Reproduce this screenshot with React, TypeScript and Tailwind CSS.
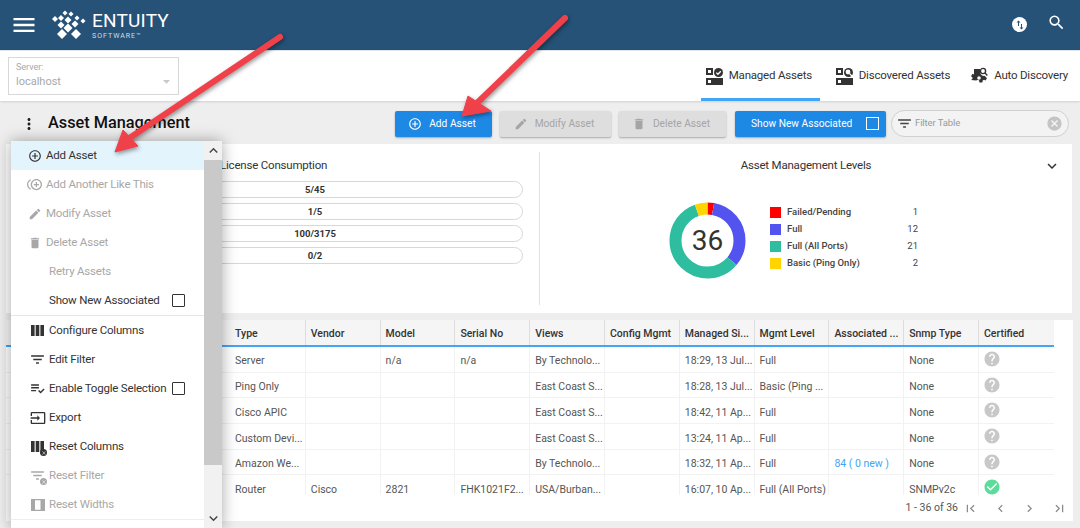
import { ReactNode } from "react";
import {
  MdAddCircleOutline,
  MdArrowDropDown,
  MdCancel,
  MdCheckCircle,
  MdClose,
  MdControlPointDuplicate,
  MdDelete,
  MdEdit,
  MdExpandLess,
  MdExpandMore,
  MdFilterList,
  MdFirstPage,
  MdHelp,
  MdInput,
  MdLastPage,
  MdMenu,
  MdMoreVert,
  MdNavigateBefore,
  MdNavigateNext,
  MdPlaylistAddCheck,
  MdSearch,
  MdSwapVert,
} from "react-icons/md";

const columns = ["Type", "Vendor", "Model", "Serial No", "Views", "Config Mgmt", "Managed Si...", "Mgmt Level", "Associated ...", "Snmp Type", "Certified"];

const rows = [
  ["Server", "", "n/a", "n/a", "By Technolo...", "", "18:29, 13 Jul...", "Full", "", "None", "unknown"],
  ["Ping Only", "", "", "", "East Coast S...", "", "18:28, 13 Jul...", "Basic (Ping ...", "", "None", "unknown"],
  ["Cisco APIC", "", "", "", "East Coast S...", "", "18:42, 11 Ap...", "Full", "", "None", "unknown"],
  ["Custom Devi...", "", "", "", "East Coast S...", "", "13:24, 11 Ap...", "Full", "", "None", "unknown"],
  ["Amazon We...", "", "", "", "By Technolo...", "", "18:32, 11 Ap...", "Full", "84 ( 0 new )", "None", "unknown"],
  ["Router", "Cisco", "2821", "FHK1021F2...", "USA/Burban...", "", "16:07, 10 Ap...", "Full (All Ports)", "", "SNMPv2c", "ok"],
];

const legend = [
  { name: "Failed/Pending", value: 1, color: "bg-[#ff0000]" },
  { name: "Full", value: 12, color: "bg-[#5353f0]" },
  { name: "Full (All Ports)", value: 21, color: "bg-[#2ebd9f]" },
  { name: "Basic (Ping Only)", value: 2, color: "bg-[#ffd400]" },
];

function Logo() {
  const dots = [
    [65, 13, 2.5], [71, 14, 2.5], [77, 18, 2.5], [83, 21, 2.5],
    [55, 19, 3], [61, 18, 3], [68, 20, 3.5], [75, 24, 3.5],
    [61, 25, 3.5], [68, 28, 4.5], [62, 34, 5], [76, 34, 5],
  ];
  return (
    <svg width="36" height="32" viewBox="50 9 36 32" className="shrink-0">
      {dots.map(([x, y, r], i) => (
        <polygon key={i} fill="#fff" points={`${x},${y - r} ${x + r},${y} ${x},${y + r} ${x - r},${y}`} />
      ))}
    </svg>
  );
}

function Donut() {
  const parts = [
    { value: 1, color: "#ff0000" },
    { value: 12, color: "#5353f0" },
    { value: 21, color: "#2ebd9f" },
    { value: 2, color: "#ffd400" },
  ];
  const radius = 32;
  const length = 2 * Math.PI * radius;
  let used = 0;
  return (
    <div className="relative h-[77px] w-[77px] shrink-0">
      <svg width="77" height="77" viewBox="0 0 77 77" className="-rotate-90">
        {parts.map((p) => {
          const dash = (p.value / 36) * length;
          const circle = (
            <circle key={p.color} cx="38.5" cy="38.5" r={radius} fill="none" stroke={p.color} strokeWidth="12" strokeDasharray={`${dash} ${length - dash}`} strokeDashoffset={-used} />
          );
          used += dash;
          return circle;
        })}
      </svg>
      <div className="absolute inset-0 flex items-center justify-center text-[28px] text-[#333]">36</div>
    </div>
  );
}

function AssetIcon({ badge }: { badge: "check" | "search" }) {
  return (
    <svg width="17" height="17" viewBox="0 0 17 17" className="shrink-0 text-[#333]" fill="currentColor">
      <path d="M0 0h7v7H0z M2 2v3h3V2z" fillRule="evenodd" />
      <path d="M0 10h17v7H0z M2 12v3h3v-3z" fillRule="evenodd" />
      <circle cx="12.5" cy="4.5" r="4.5" />
      {badge === "check" ? (
        <path d="M10.3 4.6l1.6 1.6 2.9-3" fill="none" stroke="#fff" strokeWidth="1.3" />
      ) : (
        <>
          <circle cx="12" cy="4" r="2.4" fill="#fff" />
          <path d="M13.5 5.5l2.5 2.6" stroke="#fff" strokeWidth="1.2" />
        </>
      )}
    </svg>
  );
}

function GearIcon() {
  return (
    <svg width="17" height="18" viewBox="0 0 17 18" className="shrink-0 text-[#333]" fill="currentColor">
      <path d="M3 2h6v3.5a4 4 0 0 0 5 3.3l.6 1.2 1.4 1-1.4 2.4-1.6-.6-1.3.8-.3 1.8h-3l-.3-1.8-1.3-.8-1.6.6L0 13l1.4-1.1v-1.6L0 9.2l1.5-2.4 1.5.6z" />
      <circle cx="8" cy="11" r="1.8" fill="#fff" />
      <circle cx="12" cy="4" r="2.6" fill="none" stroke="currentColor" strokeWidth="1.4" />
      <path d="M14 6l2.4 2.4" stroke="currentColor" strokeWidth="1.4" />
    </svg>
  );
}

function ColumnsIcon() {
  return (
    <svg width="13" height="11" viewBox="0 0 13 11" fill="currentColor">
      <path d="M0 0h3.6v11H0z M4.7 0h3.6v11H4.7z M9.4 0H13v11H9.4z" />
    </svg>
  );
}

function Tab({ icon, label, active }: { icon: ReactNode; label: string; active?: boolean }) {
  return (
    <div className={`flex h-[50px] items-center gap-[6px] whitespace-nowrap px-[5px] text-[11.5px] tracking-[-0.2px] text-[#333] ${active ? "border-b-[3px] border-[#42a5f5] pt-[3px]" : ""}`}>
      {icon}
      <span>{label}</span>
    </div>
  );
}

function ToolButton({ icon, label, width, on }: { icon: ReactNode; label: string; width: string; on?: boolean }) {
  return (
    <button className={`flex h-[26px] items-center justify-center gap-[7px] whitespace-nowrap rounded-[2px] pr-[3px] text-[10.2px] shadow-[0_1px_2px_rgba(0,0,0,0.3)] ${width} ${on ? "bg-[#1e88e5] text-white" : "bg-[#dedede] text-[#a5a5a5]"}`}>
      {icon}
      <span>{label}</span>
    </button>
  );
}

function MenuRow({ icon, label, off, selected, check, indent }: { icon?: ReactNode; label: string; off?: boolean; selected?: boolean; check?: boolean; indent?: string }) {
  return (
    <div className={`flex h-[29px] items-center whitespace-nowrap text-[11.5px] tracking-[-0.2px] ${selected ? "bg-[#e3f4fd]" : ""} ${off ? "text-[#a8a8a8]" : "text-[#333]"} ${indent ?? "pl-[15px]"}`}>
      {icon && <span className="flex w-[17px] shrink-0 justify-center">{icon}</span>}
      <span className={icon ? "ml-[3px]" : ""}>{label}</span>
      {check && <span className="ml-auto mr-[19px] h-[13px] w-[13px] rounded-[1px] border-[1.5px] border-[#333]" />}
    </div>
  );
}

function BadgedIcon({ children, tone }: { children: ReactNode; tone: string }) {
  return (
    <span className="relative flex h-[17px] w-[17px] items-center justify-center">
      {children}
      <span className={`absolute -bottom-[1px] -right-[1px] flex h-[7px] w-[7px] items-center justify-center rounded-full text-white ${tone}`}>
        <MdClose size={6} />
      </span>
    </span>
  );
}

function Menu() {
  return (
    <div className="absolute left-[11px] top-[141px] flex h-[387px] w-[211px] overflow-hidden bg-white shadow-[0_0_14px_rgba(0,0,0,0.35)]">
      <div className="w-[193px] shrink-0">
        <MenuRow selected icon={<MdAddCircleOutline size={14} />} label="Add Asset" />
        <MenuRow off icon={<MdControlPointDuplicate size={15} />} label="Add Another Like This" />
        <MenuRow off icon={<MdEdit size={14} />} label="Modify Asset" />
        <MenuRow off icon={<MdDelete size={14} />} label="Delete Asset" />
        <MenuRow off label="Retry Assets" indent="pl-[38px]" />
        <MenuRow check label="Show New Associated" indent="pl-[38px]" />
        <div className="border-t border-[#e6e6e6]">
          <MenuRow icon={<ColumnsIcon />} label="Configure Columns" indent="pl-[18px]" />
          <MenuRow icon={<MdFilterList size={17} />} label="Edit Filter" indent="pl-[18px]" />
          <MenuRow check icon={<MdPlaylistAddCheck size={17} />} label="Enable Toggle Selection" indent="pl-[18px]" />
          <MenuRow icon={<MdInput size={16} />} label="Export" indent="pl-[18px]" />
          <MenuRow icon={<BadgedIcon tone="bg-[#333]"><ColumnsIcon /></BadgedIcon>} label="Reset Columns" indent="pl-[18px]" />
          <MenuRow off icon={<BadgedIcon tone="bg-[#a8a8a8]"><MdFilterList size={17} /></BadgedIcon>} label="Reset Filter" indent="pl-[18px]" />
          <MenuRow
            off
            icon={
              <svg width="14" height="12" viewBox="0 0 14 12">
                <path d="M0 0h14v12H0z M4 1.2v9.6h5.5V1.2z" fill="#a8a8a8" fillRule="evenodd" />
              </svg>
            }
            label="Reset Widths"
            indent="pl-[18px]"
          />
        </div>
        <div className="border-t border-[#eeeeee]" />
      </div>
      <div className="flex w-[18px] flex-col bg-[#f1f1f1]">
        <div className="flex h-[19px] items-center justify-center text-[#444]">
          <MdExpandLess size={17} />
        </div>
        <div className="h-[305px] bg-[#c9c9c9]" />
        <div className="mt-auto flex h-[19px] items-center justify-center text-[#444]">
          <MdExpandMore size={17} />
        </div>
      </div>
    </div>
  );
}

function Arrows() {
  return (
    <svg className="pointer-events-none absolute inset-0 drop-shadow-[1px_2px_2px_rgba(0,0,0,0.4)]" width="1080" height="528" viewBox="0 0 1080 528">
      <g fill="#f0414b" stroke="#f0414b" strokeLinejoin="round">
        <path d="M280 37L128 139" strokeWidth="6" strokeLinecap="round" />
        <polygon points="115,152 123,130 138,146" strokeWidth="1" />
        <path d="M565 18L477 103" strokeWidth="6" strokeLinecap="round" />
        <polygon points="462,116 468,96 491,111" strokeWidth="1" />
      </g>
    </svg>
  );
}

export default function App() {
  return (
    <div className="relative h-[528px] w-full overflow-hidden bg-[#eeeeee] font-[Roboto,sans-serif]">
      <header className="flex h-[50px] items-center bg-[#265277] pl-[12px] pr-[14px] text-white">
        <MdMenu size={28} className="-ml-[2px]" />
        <div className="ml-[12px] flex items-center gap-[6px]">
          <Logo />
          <div className="flex flex-col leading-none">
            <span className="text-[19px] leading-[20px] tracking-[0.2px]">ENTUITY</span>
            <span className="mt-[1px] text-[7px] leading-[8px] tracking-[1px] text-[#d4dee7]">SOFTWARE™</span>
          </div>
        </div>
        <div className="ml-auto flex items-center gap-[20px]">
          <span className="-mt-[1px] flex h-[15px] w-[15px] items-center justify-center rounded-full bg-white text-[#265277]">
            <MdSwapVert size={12} />
          </span>
          <MdSearch size={19} className="-mt-[5px]" />
        </div>
      </header>

      <div className="flex h-[51px] items-start border-t border-[#dfe5ea] bg-white pr-[7px] shadow-[0_1px_2px_rgba(0,0,0,0.12)]">
        <div className="ml-[8px] mt-[6px] h-[38px] w-[171px] border border-[#d8d8d8] pl-[7px] pr-[3px] pt-[4px] text-[#a8a8a8]">
          <div className="text-[9px] leading-[11px]">Server:</div>
          <div className="flex items-center justify-between text-[11px] leading-[16px]">
            localhost
            <MdArrowDropDown size={17} className="text-[#c8c8c8]" />
          </div>
        </div>
        <div className="ml-auto flex gap-[11px]">
          <div className="w-[119px]">
            <Tab active icon={<AssetIcon badge="check" />} label="Managed Assets" />
          </div>
          <Tab icon={<AssetIcon badge="search" />} label="Discovered Assets" />
          <Tab icon={<GearIcon />} label="Auto Discovery" />
        </div>
      </div>

      <div className="flex h-[43px] items-center pt-[2px]">
        <MdMoreVert size={18} className="ml-[20px] text-[#222]" />
        <div className="ml-[10px] w-[347px] text-[16.3px] font-medium text-[#111]">Asset Management</div>
        <div className="flex items-center gap-[8px]">
          <ToolButton on width="w-[97px]" icon={<MdAddCircleOutline size={14} />} label="Add Asset" />
          <ToolButton width="w-[111px]" icon={<MdEdit size={14} />} label="Modify Asset" />
          <ToolButton width="w-[107px]" icon={<MdDelete size={14} />} label="Delete Asset" />
          <button className="ml-[1px] flex h-[26px] w-[151px] items-center justify-between whitespace-nowrap rounded-[2px] bg-[#1e88e5] pl-[16px] pr-[7px] text-[10.2px] text-white shadow-[0_1px_2px_rgba(0,0,0,0.3)]">
            <span>Show New Associated</span>
            <span className="h-[13px] w-[13px] border-[1.5px] border-white" />
          </button>
          <div className="-ml-[3px] flex h-[27px] w-[178px] items-center rounded-full border border-[#d0d0d0] bg-[#f3f3f3] pl-[4px] pr-[5px] text-[9.5px] tracking-[-0.1px] text-[#9a9a9a]">
            <MdFilterList size={17} className="text-[#444]" />
            <span className="ml-[2px]">Filter Table</span>
            <MdCancel size={17} className="ml-auto text-[#c4c4c4]" />
          </div>
        </div>
      </div>

      <div className="ml-[6px] flex h-[169px] w-[1066px] bg-white">
        <div className="w-[533px] pt-[7px]">
          <div className="flex h-[30px] items-center pl-[214px] text-[11.5px] tracking-[-0.2px] text-[#333]">License Consumption</div>
          <div className="ml-[101px] flex w-[416px] flex-col gap-[5px]">
            {["5/45", "1/5", "100/3175", "0/2"].map((t) => (
              <div key={t} className="flex h-[17px] items-center justify-center rounded-full border border-[#d8d8d8] pt-[1px] text-[9.5px] font-bold text-[#333]">
                {t}
              </div>
            ))}
          </div>
        </div>
        <div className="my-[8px] w-px bg-[#e2e2e2]" />
        <div className="flex-1 pt-[7px]">
          <div className="relative flex h-[30px] items-center justify-center text-[11.5px] tracking-[-0.2px] text-[#333]">
            Asset Management Levels
            <MdExpandMore size={18} className="absolute right-[11px] text-[#333]" />
          </div>
          <div className="mt-[21px] flex items-start pl-[129px]">
            <Donut />
            <div className="ml-[24px] mt-[2px] flex w-[148px] flex-col">
              {legend.map((l) => (
                <div key={l.name} className="flex h-[17px] items-center text-[9.5px] font-medium text-[#444]">
                  <span className={`mr-[6px] h-[11px] w-[11px] ${l.color}`} />
                  {l.name}
                  <span className="ml-auto font-normal">{l.value}</span>
                </div>
              ))}
            </div>
          </div>
        </div>
      </div>

      <div className="ml-[6px] mt-[7px] h-[201px] w-[1067px] bg-white">
        <div className="h-[175px] w-[1048px] overflow-hidden">
          <div className="flex h-[27px] border-b-2 border-[#42a5f5] bg-[#f5f5f5] pl-[224px]">
            {columns.map((c) => (
              <div key={c} className="flex w-[74.8px] shrink-0 items-center border-l border-[#dddddd] pl-[5px] pt-[3px] text-[10.5px] font-medium text-[#333] first:border-l-0">
                {c}
              </div>
            ))}
          </div>
          {rows.map((row) => (
            <div key={row[0]} className="flex h-[25.7px] border-b border-[#f2f2f2] pl-[224px]">
              {row.map((cell, i) => (
                <div key={i} className={`flex w-[74.8px] shrink-0 items-center border-l border-[#f2f2f2] pl-[5px] pt-[4px] text-[10.5px] first:border-l-0 ${cell.startsWith("84") ? "text-[#42a5f5]" : "text-[#555]"}`}>
                  {cell === "unknown" ? <MdHelp size={18} className="-ml-[1px] -mt-[5px] text-[#c8c8c8]" /> : cell === "ok" ? <MdCheckCircle size={18} className="-ml-[1px] -mt-[5px] text-[#5bdc9a]" /> : cell}
                </div>
              ))}
            </div>
          ))}
        </div>
        <div className="flex h-[26px] items-center justify-end pr-[6px] text-[#8a8a8a]">
          <span className="mr-[5px] text-[10.5px] text-[#555]">1 - 36 of 36</span>
          <span className="flex w-[104px] justify-between">
            <MdFirstPage size={15} />
            <MdNavigateBefore size={15} />
            <MdNavigateNext size={15} />
            <MdLastPage size={15} />
          </span>
        </div>
      </div>

      <Menu />
      <Arrows />
    </div>
  );
}
